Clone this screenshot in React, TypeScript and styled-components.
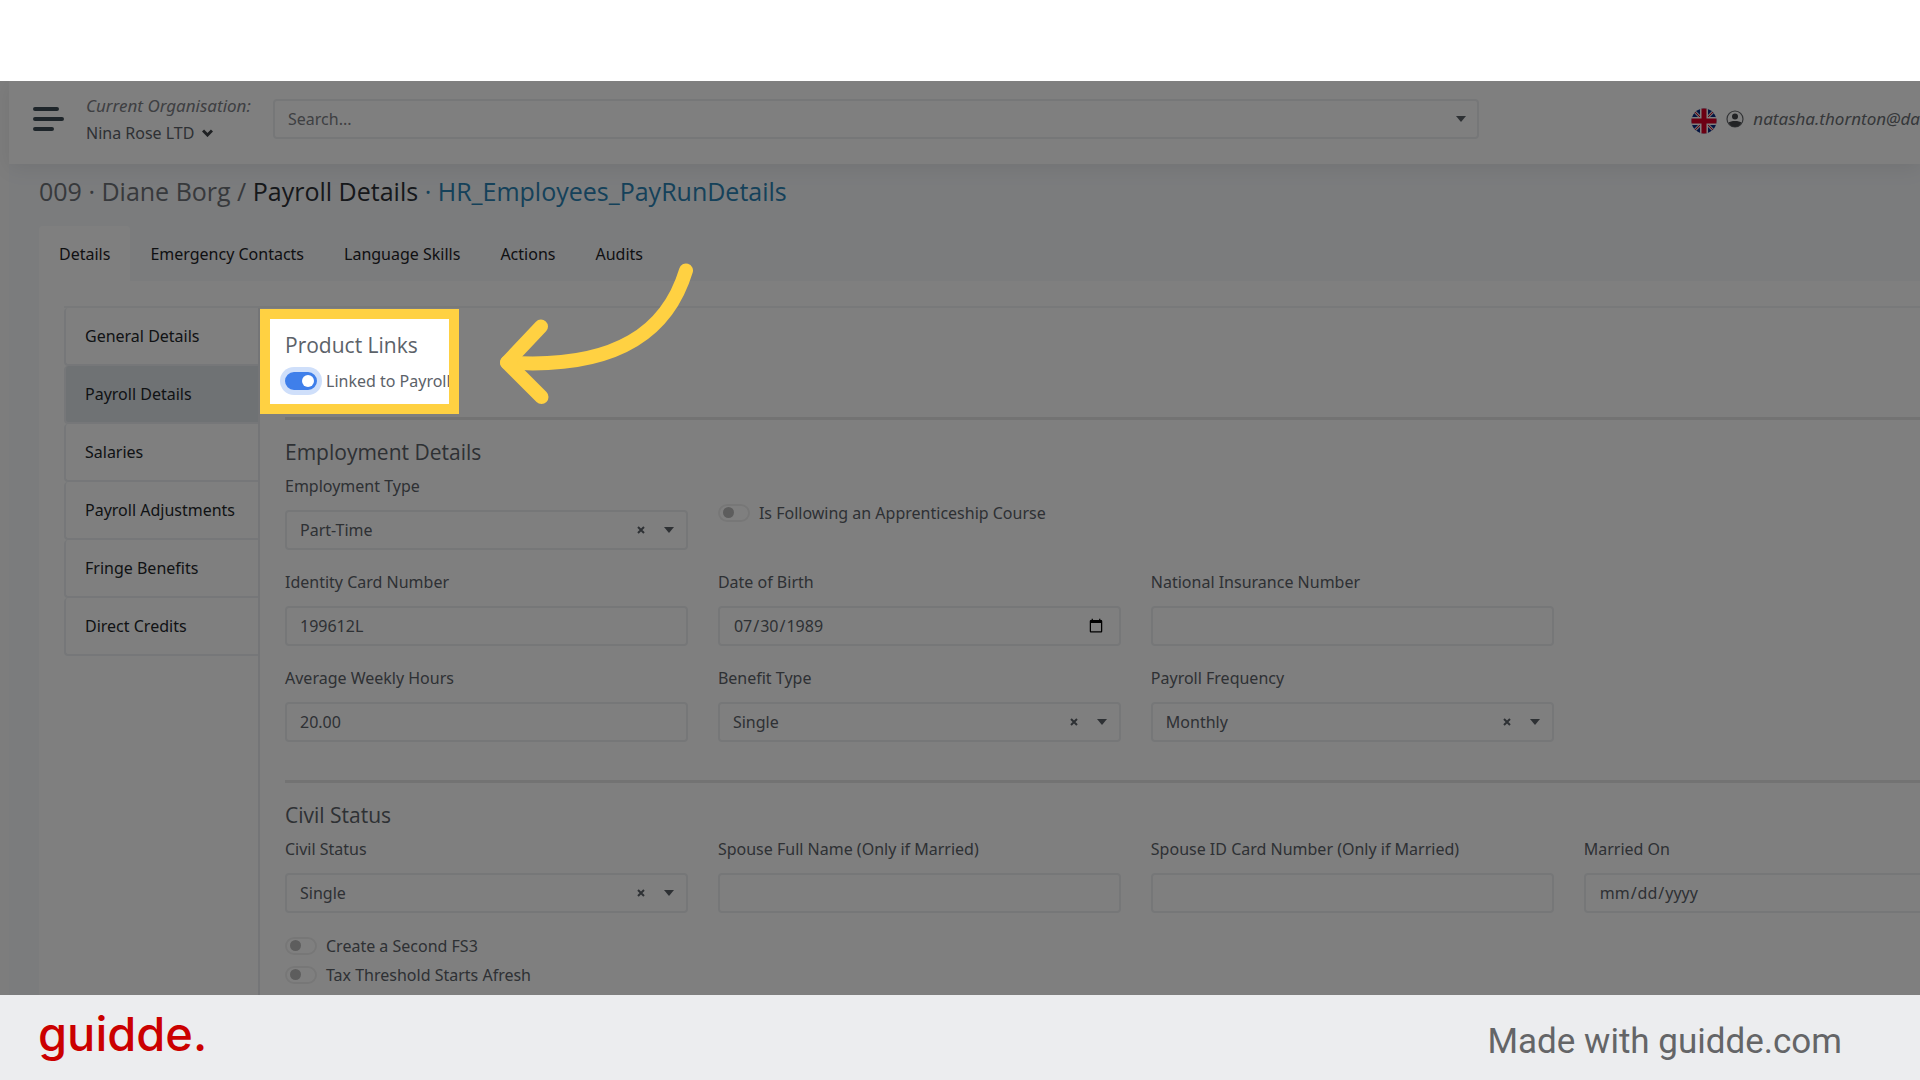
import React, { useId } from "react";
import styled, { createGlobalStyle } from "styled-components";

const GlobalStyle = createGlobalStyle`
  *, *::before, *::after { box-sizing: border-box; }
  html { overflow: hidden; }
  body {
    margin: 0;
    background: #fff;
    color: #5c6269;
    font-family: "Noto Sans", "Open Sans", sans-serif;
    font-size: 16px;
    line-height: 24px;
  }
  input, select, button { font: inherit; color: inherit; }
`;

const Slide = styled.div`
  display: flex;
  flex-direction: column;
  height: 100vh;
  padding-top: 81px;
`;

const Stage = styled.div`
  position: relative;
  flex: 1;
  min-height: 0;
  overflow: hidden;
  padding-left: 9px;
  background: #fafafa;
`;

const Header = styled.header`
  position: relative;
  display: flex;
  align-items: center;
  height: 83px;
  padding: 0 0 7px 24px;
  background: #fff;
  box-shadow: 0 4px 20px rgba(0, 0, 0, 0.08);
`;

const MenuButton = styled.button`
  display: flex;
  padding: 0;
  border: 0;
  background: none;
`;

const Organisation = styled.div`
  display: flex;
  flex-direction: column;
  gap: 3px;
  width: 187px;
  margin-left: 22px;
`;

const OrganisationLabel = styled.span`
  color: #7d8085;
  font-size: 17px;
  font-style: italic;
`;

const OrganisationButton = styled.button`
  display: flex;
  align-items: center;
  gap: 8px;
  padding: 0;
  border: 0;
  background: none;
`;

const Control = styled.div`
  display: flex;
  align-items: center;
  height: 40px;
  border: 2px solid #eceef1;
  border-radius: 4px;
  background: #fff;
`;

const SearchControl = styled(Control)`
  flex: 0 1 1206px;
`;

const TextBox = styled.input`
  flex: 1;
  min-width: 0;
  height: 100%;
  padding: 0 13px;
  border: 0;
  background: none;
  outline: 0;

  &::placeholder { color: #7d8085; opacity: 1; }
`;

const SelectBox = styled.select`
  flex: 1;
  min-width: 0;
  height: 100%;
  padding: 0 13px;
  border: 0;
  background: none;
  outline: 0;
  appearance: none;
`;

const IconButton = styled.button`
  display: flex;
  align-items: center;
  justify-content: center;
  width: 24px;
  height: 100%;
  padding: 0;
  border: 0;
  background: none;
`;

const CaretSlot = styled.span`
  display: flex;
  justify-content: center;
  width: 33px;
`;

const Account = styled.div`
  display: flex;
  align-items: center;
  gap: 9px;
  margin-left: auto;
  color: #6c7075;
  font-size: 17px;
  font-style: italic;
  white-space: nowrap;
`;

const Page = styled.div`
  width: 106%;
  min-height: 100%;
  padding: 9px 0 0 30px;
  background: #f6f8fb;
`;

const Breadcrumb = styled.h1`
  margin: 0;
  color: #6f7378;
  font-family: "Open Sans", sans-serif;
  font-size: 25px;
  font-weight: 400;
  line-height: 36px;

  strong { color: #2d3136; font-weight: 400; }
  a { color: #2b83b4; text-decoration: none; }
`;

const Tabs = styled.nav`
  display: flex;
  margin-top: 17px;
`;

const Tab = styled.a<{ $active?: boolean }>`
  padding: 16px 20px 15px;
  border-radius: 4px 4px 0 0;
  background: ${({ $active }) => ($active ? "#fff" : "transparent")};
  color: #1f2327;
  text-decoration: none;
`;

const Panel = styled.main`
  padding: 25px;
  background: #fff;
`;

const Card = styled.div`
  display: flex;
  min-height: 760px;
  border-top: 2px solid #f0f2f4;
`;

const SideNav = styled.nav`
  flex: 0 0 196px;
  border-right: 2px solid #e9ebee;
`;

const SideLink = styled.a<{ $active?: boolean }>`
  display: flex;
  align-items: center;
  height: 58px;
  padding: 0 19px;
  border: solid #eceff2;
  border-width: 0 0 2px 2px;
  border-radius: 4px 0 0 4px;
  background: ${({ $active }) => ($active ? "#dfe5e9" : "#fff")};
  color: #23272b;
  text-decoration: none;
  white-space: nowrap;
`;

const Form = styled.form`
  flex: 1;
  min-width: 0;
  padding: 22px 0 0 25px;
`;

const Section = styled.section<{ $compact?: boolean }>`
  padding-bottom: ${({ $compact }) => ($compact ? "22px" : "38px")};

  & + & {
    padding-top: 17px;
    border-top: 3px solid #e6e6e6;
  }
`;

const SectionTitle = styled.h2`
  margin: 0 0 6px;
  font-family: "Open Sans", sans-serif;
  font-size: 21px;
  font-weight: 400;
  line-height: 30px;
`;

const Grid = styled.div`
  display: grid;
  grid-template-columns: repeat(4, minmax(0, 1fr));
  gap: 20px 30px;
  padding: 1px 23px 0 0;
`;

const Field = styled.div<{ $start?: boolean }>`
  display: flex;
  flex-direction: column;
  gap: 12px;
  grid-column-start: ${({ $start }) => ($start ? "1" : "auto")};
`;

const SwitchLabel = styled.label`
  display: flex;
  align-items: center;
  gap: 9px;
  min-height: 29px;
  white-space: nowrap;
`;

const SwitchCell = styled.div`
  padding-top: 24px;
`;

const SwitchList = styled.div`
  margin-top: 18px;
`;

const Switch = styled.input`
  display: flex;
  align-items: center;
  width: 32px;
  height: 18px;
  margin: 0;
  padding: 0 3px;
  appearance: none;
  border: 2px solid #efefef;
  border-radius: 9px;
  background: #fff;

  &::before {
    content: "";
    width: 11px;
    height: 11px;
    border-radius: 50%;
    background: #bbb;
  }

  &:checked {
    justify-content: flex-end;
    border-color: #3f7fea;
    background: #3f7fea;
    box-shadow: 0 0 0 5px #cfdffa;
    padding: 0 1px;
  }

  &:checked::before {
    width: 12px;
    height: 12px;
    background: #fff;
  }
`;

/* Darkens everything on the stage except the area it frames. */
const Spotlight = styled.div`
  position: absolute;
  left: 260px;
  top: 228px;
  width: 199px;
  height: 105px;
  border: 10px solid #ffd142;
  box-shadow: 0 0 0 2000px rgba(0, 0, 0, 0.5);
  pointer-events: none;
`;

const Arrow = styled.svg`
  position: absolute;
  left: 490px;
  top: 179px;
  pointer-events: none;
`;

const Footer = styled.footer`
  display: flex;
  align-items: center;
  justify-content: space-between;
  height: 85px;
  padding: 0 78px 0 38px;
  background: #ecedef;
`;

const Brand = styled.a`
  padding-bottom: 8px;
  color: #cb0000;
  font-family: Inter, sans-serif;
  font-size: 47px;
  font-weight: 500;
  line-height: 56px;
  text-decoration: none;
`;

const MadeWith = styled.span`
  padding-top: 8px;
  color: #646567;
  font-family: Roboto, sans-serif;
  font-size: 35px;
  line-height: 42px;
`;

const Caret = () => (
  <svg width="10" height="6" viewBox="0 0 10 6" aria-hidden="true">
    <path d="M0 0h10L5 6z" fill="#5c6269" />
  </svg>
);

const MenuIcon = () => (
  <svg width="31" height="26" viewBox="0 0 31 26" aria-hidden="true">
    <path
      d="M2 3h22M2 13h27M2 23h17"
      stroke="#3c4b54"
      strokeWidth="4"
      strokeLinecap="round"
    />
  </svg>
);

const ChevronIcon = () => (
  <svg width="11" height="8" viewBox="0 0 11 8" aria-hidden="true">
    <path d="M1 1.5l4.5 4.5L10 1.5" fill="none" stroke="#3f4347" strokeWidth="3" />
  </svg>
);

const CrossIcon = () => (
  <svg width="8" height="8" viewBox="0 0 8 8" aria-hidden="true">
    <path d="M1 1l6 6M7 1L1 7" stroke="#5c6269" strokeWidth="2" />
  </svg>
);

const FlagIcon = () => (
  <svg width="26" height="30" viewBox="0 -4 26 30" role="img" aria-label="English">
    <clipPath id="flag-disc">
      <circle cx="13" cy="13" r="12.5" />
    </clipPath>
    <g clipPath="url(#flag-disc)">
      <rect width="26" height="26" fill="#0b2b85" />
      <path d="M0 0l26 26M26 0L0 26" stroke="#d8d8d8" strokeWidth="3" />
      <path d="M0 0l26 26M26 0L0 26" stroke="#d80027" strokeWidth="1" />
      <path d="M13 0v26M0 13h26" stroke="#fff" strokeWidth="8" />
      <path d="M13 0v26M0 13h26" stroke="#d80027" strokeWidth="5" />
    </g>
  </svg>
);

const UserIcon = () => (
  <svg width="18" height="18" viewBox="0 0 18 18" aria-hidden="true">
    <circle cx="9" cy="9" r="8" fill="none" stroke="#66696d" strokeWidth="1.2" />
    <circle cx="9" cy="6.5" r="3" fill="#44474b" />
    <path d="M2.500 12.500C4.500 10.400 13.500 10.400 15.500 12.500C14 15.700 11.500 17 9 17S4 15.700 2.500 12.500z" fill="#44474b" />
  </svg>
);

type FieldProps = { label: string; value?: string; start?: boolean };

function TextField({ label, value, start }: FieldProps) {
  const id = useId();
  return (
    <Field $start={start}>
      <label htmlFor={id}>{label}</label>
      <Control>
        <TextBox id={id} type="text" defaultValue={value} />
      </Control>
    </Field>
  );
}

function DateField({ label, value }: FieldProps) {
  const id = useId();
  return (
    <Field>
      <label htmlFor={id}>{label}</label>
      <Control>
        <TextBox id={id} type="date" defaultValue={value} />
      </Control>
    </Field>
  );
}

function SelectField({ label, value }: FieldProps) {
  const id = useId();
  return (
    <Field>
      <label htmlFor={id}>{label}</label>
      <Control>
        <SelectBox id={id} defaultValue={value}>
          <option>{value}</option>
        </SelectBox>
        <IconButton type="button" aria-label={`Clear ${label}`}>
          <CrossIcon />
        </IconButton>
        <CaretSlot>
          <Caret />
        </CaretSlot>
      </Control>
    </Field>
  );
}

function SwitchField({ label, on }: { label: string; on?: boolean }) {
  return (
    <SwitchLabel>
      <Switch type="checkbox" role="switch" defaultChecked={on} />
      {label}
    </SwitchLabel>
  );
}

const tabs = ["Details", "Emergency Contacts", "Language Skills", "Actions", "Audits"];
const sections = [
  "General Details",
  "Payroll Details",
  "Salaries",
  "Payroll Adjustments",
  "Fringe Benefits",
  "Direct Credits",
];

export default function App() {
  return (
    <Slide>
      <GlobalStyle />
      <Stage>
        <Header>
          <MenuButton type="button" aria-label="Menu">
            <MenuIcon />
          </MenuButton>
          <Organisation>
            <OrganisationLabel>Current Organisation:</OrganisationLabel>
            <OrganisationButton type="button">
              Nina Rose LTD <ChevronIcon />
            </OrganisationButton>
          </Organisation>
          <SearchControl>
            <TextBox type="text" placeholder="Search..." aria-label="Search" />
            <CaretSlot>
              <Caret />
            </CaretSlot>
          </SearchControl>
          <Account>
            <FlagIcon />
            <UserIcon />
            <span>natasha.thornton@da</span>
          </Account>
        </Header>
        <Page>
          <Breadcrumb>
            009 · Diane Borg / <strong>Payroll Details</strong>{" "}
            <a href="#report">· HR_Employees_PayRunDetails</a>
          </Breadcrumb>
          <Tabs>
            {tabs.map((tab, i) => (
              <Tab key={tab} href="#tab" $active={i === 0}>
                {tab}
              </Tab>
            ))}
          </Tabs>
          <Panel>
            <Card>
              <SideNav>
                {sections.map((name, i) => (
                  <SideLink key={name} href="#section" $active={i === 1}>
                    {name}
                  </SideLink>
                ))}
              </SideNav>
              <Form>
                <Section $compact>
                  <SectionTitle>Product Links</SectionTitle>
                  <SwitchField label="Linked to Payroll" on />
                </Section>
                <Section>
                  <SectionTitle>Employment Details</SectionTitle>
                  <Grid>
                    <SelectField label="Employment Type" value="Part-Time" />
                    <SwitchCell>
                      <SwitchField label="Is Following an Apprenticeship Course" />
                    </SwitchCell>
                    <TextField label="Identity Card Number" value="199612L" start />
                    <DateField label="Date of Birth" value="1989-07-30" />
                    <TextField label="National Insurance Number" />
                    <TextField label="Average Weekly Hours" value="20.00" start />
                    <SelectField label="Benefit Type" value="Single" />
                    <SelectField label="Payroll Frequency" value="Monthly" />
                  </Grid>
                </Section>
                <Section>
                  <SectionTitle>Civil Status</SectionTitle>
                  <Grid>
                    <SelectField label="Civil Status" value="Single" />
                    <TextField label="Spouse Full Name (Only if Married)" />
                    <TextField label="Spouse ID Card Number (Only if Married)" />
                    <DateField label="Married On" />
                  </Grid>
                  <SwitchList>
                    <SwitchField label="Create a Second FS3" />
                    <SwitchField label="Tax Threshold Starts Afresh" />
                  </SwitchList>
                </Section>
              </Form>
            </Card>
          </Panel>
        </Page>
        <Spotlight />
        <Arrow width="214" height="234" viewBox="490 260 214 234" aria-hidden="true">
          <g fill="none" stroke="#ffd142" strokeWidth="14" strokeLinecap="round" strokeLinejoin="round">
            <path d="M686 270.500C668 330 618 370 507 362.500" />
            <path d="M541 326.500L507 362.500L541.500 397" />
          </g>
        </Arrow>
      </Stage>
      <Footer>
        <Brand href="#guidde">guidde.</Brand>
        <MadeWith>Made with guidde.com</MadeWith>
      </Footer>
    </Slide>
  );
}
